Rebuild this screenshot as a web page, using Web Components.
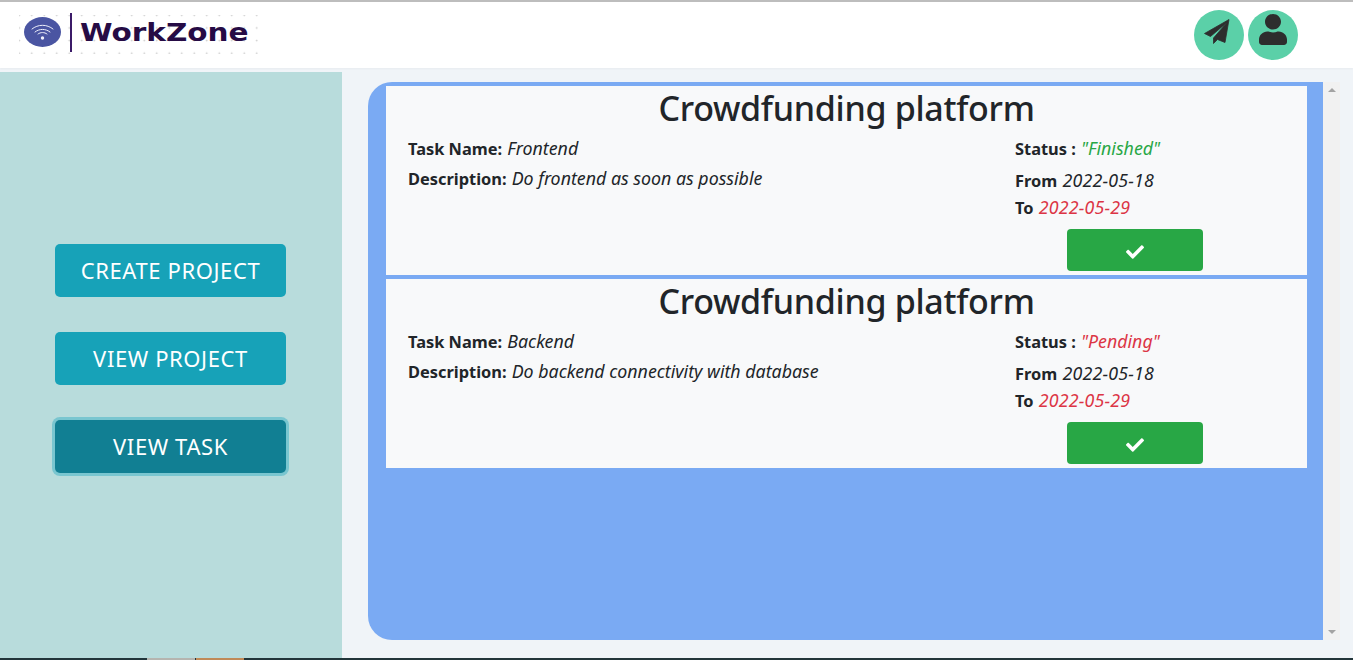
<!DOCTYPE html>
<html lang="en">
<head>
<meta charset="utf-8">
<title>WorkZone</title>
<style>
    html, body { margin: 0; height: 100%; overflow: hidden; }
    body { font-family: "Noto Sans", "Open Sans", sans-serif; color: #212529; }
</style>
</head>
<body>
<wz-app>
    <wz-header slot="header"></wz-header>
    <wz-sidebar slot="sidebar">
        <wz-nav-button>Create Project</wz-nav-button>
        <wz-nav-button>View Project</wz-nav-button>
        <wz-nav-button active>View Task</wz-nav-button>
    </wz-sidebar>
    <wz-task-panel slot="main">
        <wz-task-card project="Crowdfunding platform" task="Frontend" description="Do frontend as soon as possible" status="Finished" from="2022-05-18" to="2022-05-29"></wz-task-card>
        <wz-task-card project="Crowdfunding platform" task="Backend" description="Do backend connectivity with database" status="Pending" from="2022-05-18" to="2022-05-29"></wz-task-card>
    </wz-task-panel>
</wz-app>
<script>
class WzApp extends HTMLElement {
    constructor() {
        super();
        const shadow = this.attachShadow({ mode: 'open' });
        shadow.innerHTML = `
            <style>
                :host { display: flex; flex-direction: column; height: 660px; background: #f0f4f8; }
                .top { flex: 0 0 2px; background: #bdbdbd; }
                .body { flex: 1 1 auto; display: flex; min-height: 0; }
                .strip { flex: 0 0 2px; display: flex; background: #22353a; }
                .strip i { display: block; }
                .strip .a { width: 147px; }
                .strip .b { width: 48px; background: #b5b5b0; }
                .strip .c { width: 1px; }
                .strip .d { width: 48px; background: #c08a58; }
            </style>
            <div class="top"></div>
            <slot name="header"></slot>
            <div class="body">
                <slot name="sidebar"></slot>
                <slot name="main"></slot>
            </div>
            <div class="strip"><i class="a"></i><i class="b"></i><i class="c"></i><i class="d"></i></div>
        `;
    }
}

class WzHeader extends HTMLElement {
    constructor() {
        super();
        const shadow = this.attachShadow({ mode: 'open' });
        shadow.innerHTML = `
            <style>
                :host { flex: 0 0 66px; display: flex; align-items: center; justify-content: space-between; background: #fff; padding: 0 55px 0 19px; margin-bottom: 4px; box-shadow: 0 1px 2px rgba(0,0,0,.04); }
                .icons { display: flex; gap: 4px; }
            </style>
            <wz-logo></wz-logo>
            <div class="icons">
                <wz-round-icon>
                    <svg width="50" height="50" viewBox="0 0 50 50"><path stroke="#2d2d2d" stroke-width=".8" stroke-linejoin="round" d="M35 9.500L10.500 23.500L16.500 26.500L33 12.500L19.500 28L19.500 33.500L23.500 29.500L31 32.500Z"/></svg>
                </wz-round-icon>
                <wz-round-icon>
                    <svg width="28" height="31" viewBox="0 0 448 512" style="margin-top:-12px" preserveAspectRatio="none"><path d="M224 256c70.7 0 128-57.3 128-128S294.7 0 224 0 96 57.3 96 128s57.3 128 128 128zm89.6 32h-16.7c-22.2 10.2-46.9 16-72.9 16s-50.6-5.8-72.9-16h-16.7C60.2 288 0 348.2 0 422.4V464c0 26.5 21.5 48 48 48h352c26.5 0 48-21.5 48-48v-41.6c0-74.2-60.2-134.4-134.4-134.4z"/></svg>
                </wz-round-icon>
            </div>
        `;
    }
}

class WzLogo extends HTMLElement {
    constructor() {
        super();
        const shadow = this.attachShadow({ mode: 'open' });
        shadow.innerHTML = `
            <style>
                :host { display: flex; align-items: center; width: 239px; height: 39px; box-sizing: border-box; padding: 0 0 5px 5px; margin-bottom: 1px;
                    background-image: radial-gradient(circle, #c8c8c8 .7px, transparent 1.1px); background-size: 12.5px 12.65px; background-position: -6px -6px; }
                svg { display: block; flex: none; }
                .rule { width: 1.5px; height: 39px; background: #3b1a68; margin: 0 8px 0 9px; flex: none; }
                .name { font: 700 25px/1 "DejaVu Sans", sans-serif; color: #260b45; margin-top: 1px; white-space: nowrap; transform: scaleX(1.18); transform-origin: left center; }
            </style>
            <svg width="37" height="30" viewBox="0 0 37 30">
                <ellipse cx="18.5" cy="15" rx="18.5" ry="15" fill="#4a55a2"/>
                <g fill="none" stroke="#eef0fb" stroke-width="1" stroke-linecap="round">
                    <path d="M8 12c6-5 15-5 21 0"/>
                    <path d="M11 15c4.500-3.500 10.500-3.500 15 0"/>
                    <path d="M14 17c2.500-2 6.500-2 9 0"/>
                </g>
                <circle cx="18.500" cy="21" r="1.700" fill="#eef0fb"/>
            </svg>
            <span class="rule"></span>
            <span class="name">WorkZone</span>
        `;
    }
}

class WzRoundIcon extends HTMLElement {
    constructor() {
        super();
        const shadow = this.attachShadow({ mode: 'open' });
        shadow.innerHTML = `
            <style>
                :host { display: flex; align-items: center; justify-content: center; width: 50px; height: 50px; border-radius: 50%; background: #5bd0a8; }
                ::slotted(svg) { fill: #2d2d2d; display: block; }
            </style>
            <slot></slot>
        `;
    }
}

class WzSidebar extends HTMLElement {
    constructor() {
        super();
        const shadow = this.attachShadow({ mode: 'open' });
        shadow.innerHTML = `
            <style>
                :host { flex: 0 0 342px; display: flex; flex-direction: column; justify-content: center; gap: 35px; box-sizing: border-box; height: 586px; padding: 0 56px 13px 55px; background: #b8dcdc; }
            </style>
            <slot></slot>
        `;
    }
}

class WzNavButton extends HTMLElement {
    constructor() {
        super();
        const shadow = this.attachShadow({ mode: 'open' });
        shadow.innerHTML = `
            <style>
                :host { display: flex; align-items: center; justify-content: center; box-sizing: border-box; height: 53px; padding-bottom: 2px; border-radius: 5px; background: #17a2b8; color: #fff; font-size: 22px; text-transform: uppercase; letter-spacing: .6px; }
                :host([active]) { background: #117f93; box-shadow: 0 0 0 3px rgba(58,176,195,.5); }
            </style>
            <slot></slot>
        `;
    }
}

class WzTaskPanel extends HTMLElement {
    constructor() {
        super();
        const shadow = this.attachShadow({ mode: 'open' });
        shadow.innerHTML = `
            <style>
                :host { flex: 1 1 auto; display: flex; min-width: 0; height: 558px; margin: 10px 13px 0 26px; }
                .panel { flex: 1 1 auto; display: flex; flex-direction: column; gap: 4px; box-sizing: border-box; padding: 4px 16px 0 18px; background: #7aaaf3; border-radius: 24px 0 0 24px; }
                .bar { flex: 0 0 17px; display: flex; flex-direction: column; justify-content: space-between; align-items: center; background: #f1f1f1; padding: 6px 0; box-sizing: border-box; }
                .up { border: 4px solid transparent; border-top: 0; border-bottom: 4px solid #a3a3a3; }
                .down { border: 4px solid transparent; border-bottom: 0; border-top: 4px solid #a3a3a3; }
            </style>
            <div class="panel"><slot></slot></div>
            <div class="bar"><span class="up"></span><span class="down"></span></div>
        `;
    }
}

const cardTemplate = document.createElement('template');
cardTemplate.innerHTML = `
    <style>
        :host { display: block; height: 189px; box-sizing: border-box; background: #f8f9fa; font-size: 16px; line-height: 24px; }
        h2 { margin: 0; padding-top: 1px; font-size: 34px; font-weight: 500; line-height: 42px; text-align: center; letter-spacing: -.3px; }
        .row { display: flex; margin-top: 7px; }
        .left { flex: 0 0 629px; padding-left: 22px; box-sizing: border-box; }
        .right { flex: 1 1 auto; }
        p { margin: 0; white-space: nowrap; }
        .gap { margin-bottom: 5px; }
        .status { margin-bottom: 6px; }
        .dates p { height: 27px; line-height: 27px; }
        b { font-weight: 700; font-size: 16.4px; }
        i { font-size: 17.8px; margin-left: 1px; }
        .dates i { letter-spacing: .2px; }
        i.finished { color: #28a745; }
        i.pending, i.end { color: #dc3545; }
        button { display: flex; align-items: center; justify-content: center; width: 136px; height: 42px; margin: 8px 0 0 52px; padding: 3px 0 0; border: 0; border-radius: 4px; background: #28a745; }
        svg { fill: #fff; display: block; }
    </style>
    <h2 class="title"></h2>
    <div class="row">
        <div class="left">
            <p class="gap"><b>Task Name:</b> <i class="task"></i></p>
            <p><b>Description:</b> <i class="desc"></i></p>
        </div>
        <div class="right">
            <p class="status"><b>Status :</b> <i class="state"></i></p>
            <div class="dates">
                <p><b>From</b> <i class="from"></i></p>
                <p><b>To</b> <i class="to end"></i></p>
            </div>
            <button type="button"><svg width="18" height="18" viewBox="0 0 512 512"><path d="M173.898 439.404l-166.4-166.4c-9.997-9.997-9.997-26.206 0-36.204l36.203-36.204c9.997-9.998 26.207-9.998 36.204 0L192 312.69 432.095 72.596c9.997-9.997 26.207-9.997 36.204 0l36.203 36.204c9.997 9.997 9.997 26.206 0 36.204l-294.4 294.401c-9.998 9.997-26.207 9.997-36.204-.001z"/></svg></button>
        </div>
    </div>
`;

class WzTaskCard extends HTMLElement {
    constructor() {
        super();
        const shadow = this.attachShadow({ mode: 'open' });
        shadow.appendChild(cardTemplate.content.cloneNode(true));
    }
    connectedCallback() {
        const root = this.shadowRoot;
        const status = this.getAttribute('status');
        root.querySelector('.title').textContent = this.getAttribute('project');
        root.querySelector('.task').textContent = this.getAttribute('task');
        root.querySelector('.desc').textContent = this.getAttribute('description');
        root.querySelector('.from').textContent = this.getAttribute('from');
        root.querySelector('.to').textContent = this.getAttribute('to');
        const state = root.querySelector('.state');
        state.textContent = `"${status}"`;
        state.className = status.toLowerCase();
    }
}

customElements.define('wz-app', WzApp);
customElements.define('wz-header', WzHeader);
customElements.define('wz-logo', WzLogo);
customElements.define('wz-round-icon', WzRoundIcon);
customElements.define('wz-sidebar', WzSidebar);
customElements.define('wz-nav-button', WzNavButton);
customElements.define('wz-task-panel', WzTaskPanel);
customElements.define('wz-task-card', WzTaskCard);
</script>
</body>
</html>
